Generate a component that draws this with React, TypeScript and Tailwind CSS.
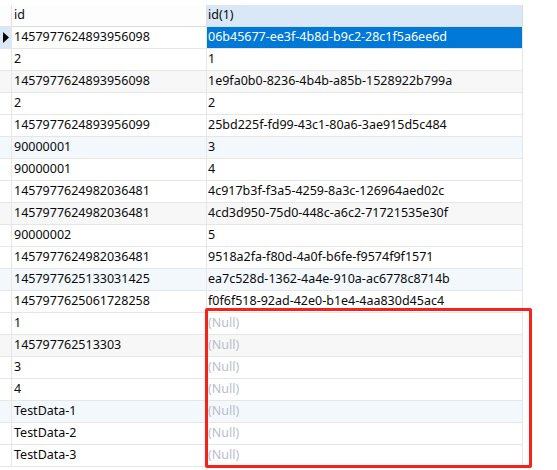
import React from 'react';

type Row = { id: string; id1: string | null; tone?: 'gray' | 'blue' };

const rows: Row[] = [
  { id: '1457977624893956098', id1: '06b45677-ee3f-4b8d-b9c2-28c1f5a6ee6d' },
  { id: '2', id1: '1' },
  { id: '1457977624893956098', id1: '1e9fa0b0-8236-4b4b-a85b-1528922b799a', tone: 'gray' },
  { id: '2', id1: '2' },
  { id: '1457977624893956099', id1: '25bd225f-fd99-43c1-80a6-3ae915d5c484' },
  { id: '90000001', id1: '3', tone: 'blue' },
  { id: '90000001', id1: '4' },
  { id: '1457977624982036481', id1: '4c917b3f-f3a5-4259-8a3c-126964aed02c' },
  { id: '1457977624982036481', id1: '4cd3d950-75d0-448c-a6c2-71721535e30f', tone: 'gray' },
  { id: '90000002', id1: '5' },
  { id: '1457977624982036481', id1: '9518a2fa-f80d-4a0f-b6fe-f9574f9f1571' },
  { id: '1457977625133031425', id1: 'ea7c528d-1362-4a4e-910a-ac6778c8714b', tone: 'blue' },
  { id: '1457977625061728258', id1: 'f0f6f518-92ad-42e0-b1e4-4aa830d45ac4' },
  { id: '1', id1: null },
  { id: '145797762513303', id1: null, tone: 'gray' },
  { id: '3', id1: null },
  { id: '4', id1: null },
  { id: 'TestData-1', id1: null, tone: 'blue' },
  { id: 'TestData-2', id1: null },
  { id: 'TestData-3', id1: null },
];

function toneClass(tone?: Row['tone']) {
  if (tone === 'gray') return 'bg-[#f7f7f7]';
  if (tone === 'blue') return 'bg-[#f3f8fd]';
  return 'bg-white';
}

export default function App() {
  return (
    <div className="relative h-[470px] w-[557px] overflow-hidden bg-white pt-[5px] font-['Noto_Sans',sans-serif] text-[12.5px] text-[#0a0a0a]">
      <div className="grid w-[523px] grid-cols-[12px_195px_316px]">
        <div className="h-[22px] border-r border-b border-[#e2e2e2] bg-[#fdfdfd]" />
        <div className="flex h-[22px] items-center border-r border-b border-[#dedede] bg-[#fdfdfd] pl-[2px]">id</div>
        <div className="flex h-[22px] items-center border-r border-b border-[#d6dde6] bg-[#d9e8f6] pl-[1px]">id(1)</div>

        {rows.map((r, i) => (
          <React.Fragment key={i}>
            <div className={`flex h-[22px] items-center border-r border-b border-[#e6e6e6] ${i === 0 ? 'bg-[#d9e8f6]' : toneClass(r.tone)}`}>
              {i === 0 && (
                <svg width="11" height="21" viewBox="0 0 11 21">
                  <path d="M3 5 L9 10.5 L3 16 Z" fill="#000" />
                </svg>
              )}
            </div>
            <div className={`flex h-[22px] items-center border-r border-b border-[#e6e6e6] pl-[2px] ${toneClass(r.tone)}`}>{r.id}</div>
            <div
              className={`flex h-[22px] items-center border-r border-b border-[#e6e6e6] pl-[1px] ${
                i === 0 ? 'bg-[#0078d7] text-white' : toneClass(r.tone)
              }`}
            >
              {r.id1 === null ? <span className="text-[#b9bdcc]">(Null)</span> : r.id1}
            </div>
          </React.Fragment>
        ))}
      </div>

      <div className="absolute left-[205px] top-[308px] h-[160px] w-[327px] rounded-[2px] border-[3px] border-[#f5231b]" />
    </div>
  );
}
